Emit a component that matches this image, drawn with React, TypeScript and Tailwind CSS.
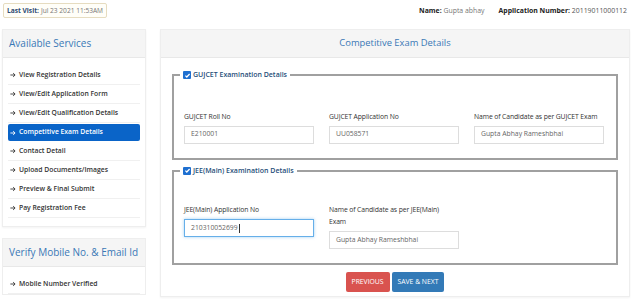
import React from 'react';

const services = [
  'View Registration Details',
  'View/Edit Application Form',
  'View/Edit Qualification Details',
  'Competitive Exam Details',
  'Contact Detail',
  'Upload Documents/Images',
  'Preview & Final Submit',
  'Pay Registration Fee',
];

function Field({ label, value, focused, labelWidth }: { label: string; value: string; focused?: boolean; labelWidth?: string }) {
  return (
    <div className="w-[130px] flex flex-col">
      <label className={'text-[6.8px] leading-[12px] tracking-[-0.1px] text-[#333] mb-[3px] ' + (labelWidth ?? '')}>
        {label}
      </label>
      <div
        className={
          'h-[18px] px-[6px] flex items-center text-[6.8px] text-[#666] bg-white border ' +
          (focused ? 'border-[#66afe9] shadow-[0_0_3px_rgba(102,175,233,0.6)]' : 'border-[#ddd]')
        }
      >
        {value}
        {focused && <span className="w-px h-[9px] bg-[#333] ml-px" />}
      </div>
    </div>
  );
}

function Legend({ text }: { text: string }) {
  return (
    <legend className="-ml-[4px] px-[3px] flex items-center gap-[2px] text-[7px] font-semibold text-[#1f4e79]">
      <span className="w-[8px] h-[8px] rounded-[1px] bg-[#1e6fd0] flex items-center justify-center">
        <svg viewBox="0 0 10 10" className="w-[7px] h-[7px]">
          <path d="M2 5.2l2 2 4-4.4" stroke="white" strokeWidth="1.8" fill="none" />
        </svg>
      </span>
      {text}
    </legend>
  );
}

function Arrow() {
  return (
    <svg viewBox="0 0 8 8" className="w-[6px] h-[6px] mr-[3px] shrink-0">
      <path d="M0.5 4h6M4.2 1.5L6.8 4 4.2 6.5" stroke="currentColor" strokeWidth="1.2" fill="none" />
    </svg>
  );
}

export default function App() {
  return (
    <div className="w-[633px] h-[300px] bg-white overflow-hidden font-['Open_Sans',sans-serif]">
      <div className="h-[29px] flex items-start justify-between px-[3px] pt-[3px]">
        <div className="h-[15px] px-[3px] flex items-center border border-[#e6dcc0] rounded-[2px] text-[6.6px] bg-[#fffef8]">
          <span className="font-bold text-[#2d4a73]">Last Visit:</span>
          <span className="ml-[2px] text-[#777]">Jul 23 2021 11:53AM</span>
        </div>
        <div className="flex gap-[14px] text-[6.9px] pt-[3px] pr-[3px]">
          <span>
            <b className="text-[#222]">Name:</b> <span className="text-[#777]">Gupta abhay</span>
          </span>
          <span>
            <b className="text-[#222]">Application Number:</b> <span className="text-[#555]">20119011000112</span>
          </span>
        </div>
      </div>

      <div className="flex items-start gap-[14px] px-[2px]">
        <div className="w-[144px] flex flex-col gap-[11px]">
          <div className="border border-[#eee] shadow-[0_1px_2px_rgba(0,0,0,0.05)]">
            <div className="h-[28px] bg-[#f5f5f5] border-b border-[#e8e8e8] flex items-center px-[6px] text-[10px] text-[#3a78b5]">
              Available Services
            </div>
            <ul className="px-[5px] pt-[8px] pb-[8px]">
              {services.map((s) => {
                const active = s === 'Competitive Exam Details';
                return (
                  <li
                    key={s}
                    className={
                      'flex items-center px-[2px] text-[6.8px] font-semibold ' +
                      (active
                        ? 'bg-[#0a64c8] text-white rounded-[2px] my-px h-[17px]'
                        : 'h-[19px] text-[#333] border-b border-[#f0f0f0]')
                    }
                  >
                    <Arrow />
                    {s}
                  </li>
                );
              })}
            </ul>
          </div>
          <div className="border border-[#eee]">
            <div className="h-[28px] bg-[#f5f5f5] border-b border-[#e8e8e8] flex items-center px-[6px] text-[10px] text-[#3a78b5] whitespace-nowrap">
              Verify Mobile No. &amp; Email Id
            </div>
            <ul className="px-[5px] pt-[8px]">
              <li className="h-[19px] flex items-center px-[2px] text-[6.8px] font-semibold text-[#333] border-b border-[#f0f0f0]">
                <Arrow />
                Mobile Number Verified
              </li>
            </ul>
          </div>
        </div>

        <div className="w-[470px] border border-[#eee] shadow-[0_1px_2px_rgba(0,0,0,0.05)]">
          <div className="h-[28px] bg-[#f5f5f5] border-b border-[#e8e8e8] flex items-center justify-center text-[9.4px] text-[#3a78b5]">
            Competitive Exam Details
          </div>
          <div className="px-[11px] pt-[12px] pb-[4px] flex flex-col gap-[6px]">
            <fieldset className="border-2 border-[#a0a0a0] px-[10px] pb-[14px] pt-[30px]">
              <Legend text="GUJCET Examination Details" />
              <div className="flex gap-[15px]">
                <Field label="GUJCET Roll No" value="E210001" />
                <Field label="GUJCET Application No" value="UU058571" />
                <Field label="Name of Candidate as per GUJCET Exam" value="Gupta Abhay Rameshbhai" />
              </div>
            </fieldset>
            <fieldset className="border-2 border-[#a0a0a0] px-[10px] pb-[14px] pt-[28px]">
              <Legend text="JEE(Main) Examination Details" />
              <div className="flex gap-[15px] items-start">
                <Field label="JEE(Main) Application No" value="210310052699" focused />
                <Field label="Name of Candidate as per JEE(Main) Exam" value="Gupta Abhay Rameshbhai" labelWidth="w-[122px]" />
              </div>
            </fieldset>
            <div className="flex justify-center gap-[2px] mt-[1px]">
              <button className="h-[20px] px-[6px] rounded-[2px] bg-[#d9534f] text-white text-[6.8px]">PREVIOUS</button>
              <button className="h-[20px] px-[6px] rounded-[2px] bg-[#337ab7] text-white text-[6.8px]">SAVE &amp; NEXT</button>
            </div>
          </div>
        </div>
      </div>
    </div>
  );
}
